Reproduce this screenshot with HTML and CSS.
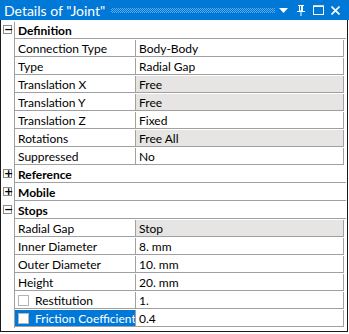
FILE: index.html
```html
<!DOCTYPE html>
<html>
<head>
<meta charset="utf-8">
<link rel="stylesheet" href="styles.css">
</head>
<body>
<div class="panel">
  <div class="titlebar">
    <span class="title">Details of "Joint"</span>
    <span class="dots"></span>
    <span class="tools">
      <svg class="ico-drop" width="9" height="6" viewBox="0 0 9 6"><path d="M0 0H9L4.5 5Z" fill="#fff"/></svg>
      <svg class="ico-pin" width="8" height="11" viewBox="0 0 8 11"><path d="M1 0.5H7M2.5 1V6H5.5V1M0 6.5H8M4 7V11" stroke="#fff" stroke-width="1" fill="none"/><rect x="4" y="1" width="1.5" height="5" fill="#fff"/></svg>
      <svg class="ico-max" width="11" height="10" viewBox="0 0 11 10"><rect x="0.5" y="1" width="10" height="8.5" stroke="#fff" fill="none"/><rect x="0" y="0.5" width="11" height="1.5" fill="#fff"/></svg>
      <svg class="ico-close" width="9" height="9" viewBox="0 0 9 9"><path d="M0.5 0.5L8.5 8.5M8.5 0.5L0.5 8.5" stroke="#fff" stroke-width="1.6"/></svg>
    </span>
  </div>
  <div class="frame">
    <div class="row cat"><div class="gut"><span class="tog">−</span></div><div class="catname">Definition</div></div>
    <div class="row"><div class="gut"></div><div class="name">Connection Type</div><div class="val">Body-Body</div></div>
    <div class="row"><div class="gut"></div><div class="name">Type</div><div class="val">Radial Gap</div></div>
    <div class="row"><div class="gut"></div><div class="name">Translation X</div><div class="val grey">Free</div></div>
    <div class="row"><div class="gut"></div><div class="name">Translation Y</div><div class="val grey">Free</div></div>
    <div class="row"><div class="gut"></div><div class="name">Translation Z</div><div class="val">Fixed</div></div>
    <div class="row"><div class="gut"></div><div class="name">Rotations</div><div class="val grey">Free All</div></div>
    <div class="row"><div class="gut"></div><div class="name">Suppressed</div><div class="val">No</div></div>
    <div class="row cat"><div class="gut"><span class="tog">+</span></div><div class="catname">Reference</div></div>
    <div class="row cat"><div class="gut"><span class="tog">+</span></div><div class="catname">Mobile</div></div>
    <div class="row cat"><div class="gut"><span class="tog">−</span></div><div class="catname">Stops</div></div>
    <div class="row"><div class="gut"></div><div class="name">Radial Gap</div><div class="val grey">Stop</div></div>
    <div class="row"><div class="gut"></div><div class="name">Inner Diameter</div><div class="val">8. mm</div></div>
    <div class="row"><div class="gut"></div><div class="name">Outer Diameter</div><div class="val">10. mm</div></div>
    <div class="row"><div class="gut"></div><div class="name">Height</div><div class="val">20. mm</div></div>
    <div class="row"><div class="gut"></div><div class="name chk"><span class="box"></span>Restitution</div><div class="val">1.</div></div>
    <div class="row"><div class="gut"></div><div class="name chk sel"><span class="box"></span>Friction Coefficient</div><div class="val">0.4</div></div>
  </div>
</div>
</body>
</html>
```
FILE: styles.css
```css
html, body {
  margin: 0;
  padding: 0;
  background: #fff;
}
body {
  width: 349px;
  height: 334px;
  overflow: hidden;
  font-family: "Lato", "Noto Sans", sans-serif;
  font-size: 12px;
  color: #000;
}
.panel {
  width: 349px;
}
.titlebar {
  height: 20px;
  background: #0078d7;
  color: #fff;
  display: flex;
  align-items: center;
  padding-left: 4px;
  box-sizing: border-box;
}
.title {
  font-size: 14px;
  white-space: nowrap;
}
.dots {
  flex: 1;
  height: 5px;
  margin: 1px 4px 0 6px;
  background: repeating-conic-gradient(#5ca9e8 0 25%, transparent 0 50%) 0 0 / 2px 2px;
}
.tools {
  display: flex;
  align-items: center;
  height: 20px;
}
.ico-drop { margin-right: 9px; margin-top: 1px; }
.ico-pin { margin-right: 8px; }
.ico-max { margin-right: 7px; }
.ico-close { margin-right: 9px; }
.frame {
  width: 348px;
  box-sizing: border-box;
  border: 1px solid #1a1a1a;
  border-top: 0;
  height: 312px;
  padding-top: 2px;
}
.row {
  display: flex;
  height: 18px;
}
.gut {
  width: 13px;
  border-right: 1px solid #a0a0a0;
  position: relative;
  flex: none;
}
.tog {
  position: absolute;
  left: 2px;
  top: 3px;
  width: 7px;
  height: 7px;
  border: 1px solid #8c8c8c;
  background: #fff;
  font-size: 11px;
  line-height: 7px;
  text-align: center;
  font-weight: bold;
  font-family: "DejaVu Sans", sans-serif;
}
.name, .val, .catname {
  height: 17px;
  line-height: 17px;
  border-bottom: 1px solid #a0a0a0;
  white-space: nowrap;
  overflow: hidden;
}
.name {
  width: 121px;
  padding-left: 3px;
  box-sizing: border-box;
  border-right: 1px solid #a0a0a0;
  flex: none;
  display: flex;
  align-items: center;
}
.val {
  width: 208px;
  padding-left: 3px;
  box-sizing: border-box;
  border-right: 1px solid #a0a0a0;
  flex: none;
}
.val.grey {
  background: #e6e5e3;
}
.catname {
  width: 331px;
  padding-left: 3px;
  box-sizing: border-box;
  font-weight: bold;
  flex: none;
}
.box {
  width: 9px;
  height: 9px;
  border: 1px solid #b4b4b4;
  background: #fff;
  margin-right: 6px;
  flex: none;
}
.name.sel {
  background: #0078d7;
  color: #fff;
}
```
